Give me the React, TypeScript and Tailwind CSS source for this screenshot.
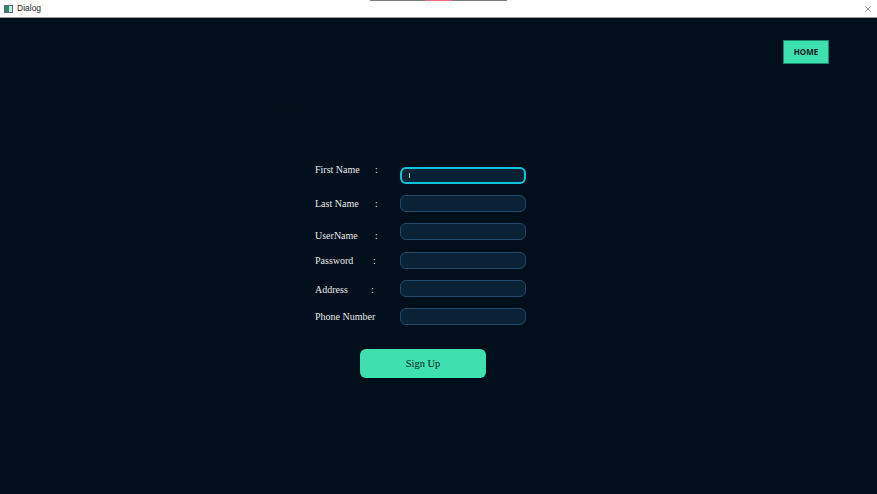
import { X } from 'lucide-react';

const fields = [
  { label: 'First Name', colon: 60, shift: '-mt-[10px]', focus: true },
  { label: 'Last Name', colon: 60, shift: 'mt-[1px]' },
  { label: 'UserName', colon: 60, shift: 'mt-[9px]' },
  { label: 'Password', colon: 58, shift: 'mt-[1px]' },
  { label: 'Address', colon: 56, shift: 'mt-[3px]' },
  { label: 'Phone Number', colon: 0, shift: 'mt-[1px]' },
];

export default function App() {
  return (
    <div className="w-[877px] h-[494px] flex flex-col overflow-hidden font-['Liberation_Sans',sans-serif]">
      <div className="relative h-[18px] bg-white border-b border-[#9a9a9a] flex items-center pl-[4px] shrink-0">
        <div className="absolute top-0 left-[370px] w-[137px] h-[1px] bg-[#7a7a7a]" />
        <div className="absolute top-0 left-[425px] w-[27px] h-[1px] bg-[#f07080]" />
        <div className="w-[9px] h-[8px] border border-[#5a6a7a] bg-[#cfe3ea] flex">
          <div className="w-[4px] h-full bg-[#2a8a6a]" />
        </div>
        <span className="ml-[4px] text-[8.5px] text-[#222]">Dialog</span>
        <X size={10} strokeWidth={1.3} className="ml-auto mr-[4px] text-[#333]" />
      </div>

      <div className="flex-1 bg-[#010f1c] flex flex-col">
        <div className="flex justify-end pr-[48px] pt-[22px]">
          <button className="w-[46px] h-[24px] bg-[#3ee0b0] border border-[#1a8a6a] text-[8px] font-bold text-[#0a1a1a] font-['Open_Sans',sans-serif]">
            HOME
          </button>
        </div>

        <div className="ml-[275px] mt-[40px] text-[7px] text-[#0a0f14] font-['Open_Sans',sans-serif]">
          GroupBox
        </div>

        <div className="ml-[315px] mt-[52px] flex flex-col gap-[11.4px] font-['Liberation_Serif',serif]">
          {fields.map((f) => (
            <div key={f.label} className="flex items-center h-[17px]">
              <div className={`relative w-[85px] h-[14px] text-[10px] leading-[14px] text-[#e8e8e8] ${f.shift}`}>
                <span>{f.label}</span>
                {f.colon > 0 && (
                  <span className="absolute top-0" style={{ left: f.colon }}>
                    :
                  </span>
                )}
              </div>
              <div
                className={`w-[126px] h-[17px] rounded-[6px] bg-[#0a2236] flex items-center pl-[7px] ${
                  f.focus ? 'border-2 border-[#0cc4dc]' : 'border border-[#1d4a6a]'
                }`}
              >
                {f.focus && <span className="w-px h-[5px] bg-[#b0c0c8]" />}
              </div>
            </div>
          ))}
        </div>

        <div className="ml-[360px] mt-[24px]">
          <button className="w-[126px] h-[29px] rounded-[6px] bg-[#3ee0b0] text-[10.5px] text-[#0a1a1a] font-['Liberation_Serif',serif]">
            Sign Up
          </button>
        </div>
      </div>
    </div>
  );
}
